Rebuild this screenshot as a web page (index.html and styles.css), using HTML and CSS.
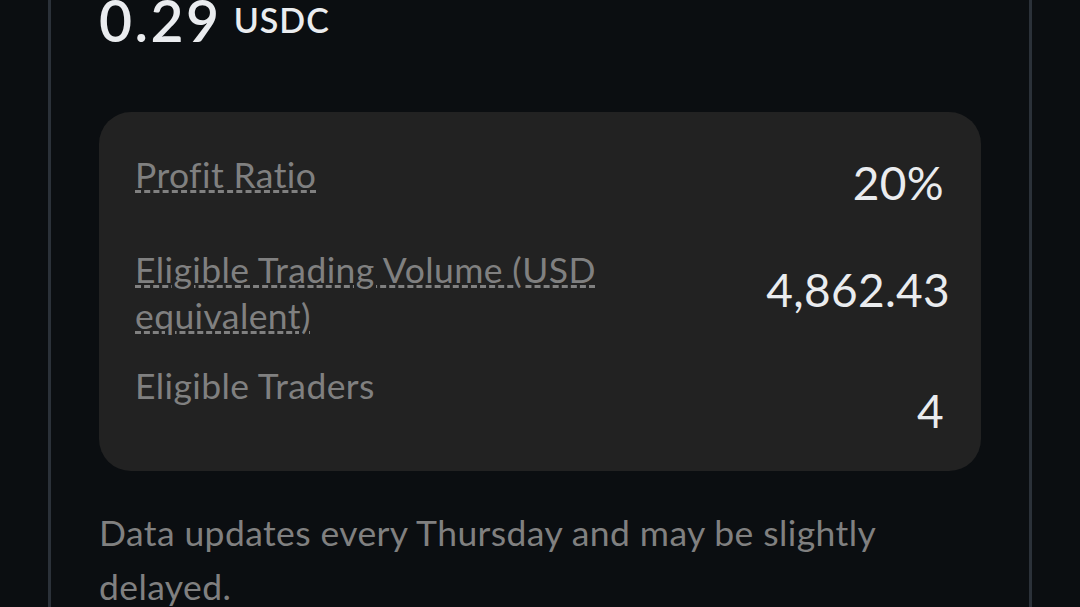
FILE: index.html
```html
<!DOCTYPE html>
<html lang="en">
<head>
<meta charset="utf-8">
<title>Rewards</title>
<link rel="stylesheet" href="styles.css">
</head>
<body>
<div class="card">
  <div class="amount">
    <span class="amount-value">0.29</span>
    <span class="amount-unit">USDC</span>
  </div>
  <div class="panel">
    <div class="row row-ratio">
      <span class="label"><span class="hint">Profit Ratio</span></span>
      <span class="value">20%</span>
    </div>
    <div class="row row-volume">
      <span class="label"><span class="hint">Eligible Trading Volume (USD equivalent)</span></span>
      <span class="value value-wide">4,862.43</span>
    </div>
    <div class="row row-traders">
      <span class="label">Eligible Traders</span>
      <span class="value">4</span>
    </div>
  </div>
  <p class="note">Data updates every Thursday and may be slightly delayed.</p>
</div>
</body>
</html>
```
FILE: styles.css
```css
html, body {
  margin: 0;
  padding: 0;
  background: #0b0e11;
  height: 100%;
  overflow: hidden;
}

body {
  font-family: "Lato", "Noto Sans", sans-serif;
  color: #eaecef;
}

.card {
  margin: 0 48px;
  border-left: 3px solid #2b3139;
  border-right: 3px solid #2b3139;
  padding: 0 48px;
  min-height: 100%;
  box-sizing: border-box;
}

.amount {
  display: flex;
  align-items: center;
  gap: 12px;
  height: 40px;
}

.amount-value {
  font-size: 57px;
  line-height: 40px;
  font-weight: 600;
  letter-spacing: 2.5px;
  color: #eaecef;
}

.amount-unit {
  font-size: 34px;
  line-height: 40px;
  font-weight: 600;
  letter-spacing: 1px;
  color: #eaecef;
}

.panel {
  margin-top: 72px;
  background: #222222;
  border-radius: 32px;
  padding: 40px 37px 0 36px;
  height: 359px;
  box-sizing: border-box;
}

.row {
  display: flex;
  justify-content: space-between;
  align-items: flex-start;
  gap: 40px;
}

.label {
  font-size: 35.5px;
  line-height: 46px;
  letter-spacing: 0.4px;
  color: #808080;
  max-width: 480px;
}

.hint {
  text-decoration: underline dashed #808080;
  text-decoration-thickness: 3px;
  text-underline-offset: 2px;
}

.value {
  font-size: 46px;
  line-height: 54px;
  letter-spacing: 0.3px;
  color: #eaecef;
  white-space: nowrap;
}

.row-ratio .value { margin-top: 4px; }
.row-volume { margin-top: 37px; }
.row-volume .value { margin-top: 16px; margin-right: -6px; }
.row-traders { margin-top: 24px; }
.row-traders .value { margin-top: 21px; }

.note {
  margin: 35px 0 0;
  font-size: 35.5px;
  line-height: 54px;
  letter-spacing: 0.4px;
  color: #808080;
}
```
